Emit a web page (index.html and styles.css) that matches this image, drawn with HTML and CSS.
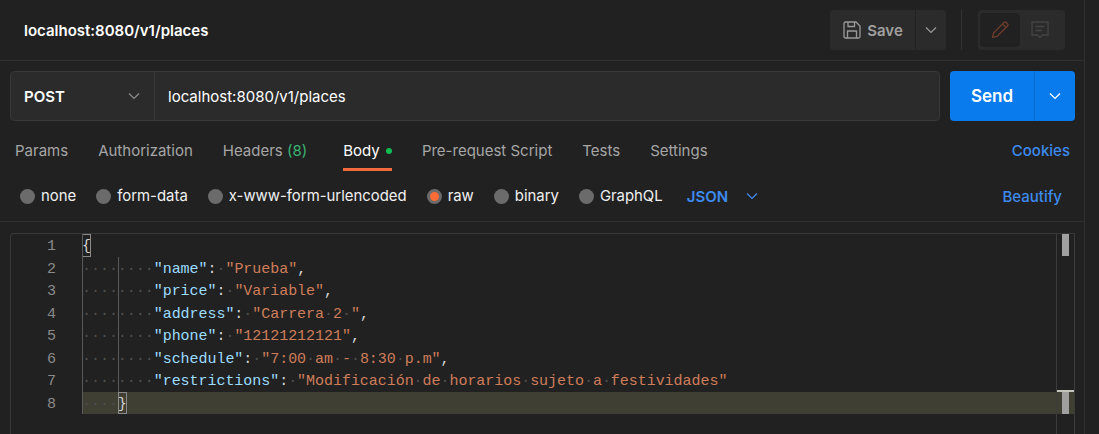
FILE: index.html
```html
<!DOCTYPE html>
<html lang="en">
<head>
    <meta charset="UTF-8">
    <title>localhost:8080/v1/places</title>
    <link rel="stylesheet" href="styles.css">
</head>
<body>
    <div class="app">
        <div class="main">
            <div class="header">
                <div class="request-name">localhost:8080/v1/places</div>
                <div class="header-actions">
                    <div class="save-group">
                        <button class="save-button">
                            <svg width="20" height="20" viewBox="0 0 20 20" fill="none" stroke="#9a9a9a" stroke-width="1.3">
                                <path d="M2 3.5C2 2.7 2.7 2 3.5 2H14L18 6V16.5C18 17.3 17.3 18 16.5 18H3.5C2.7 18 2 17.3 2 16.5Z"/>
                                <path d="M6 2V6.5H12.5V2"/>
                                <path d="M5.5 18V11H14.5V18"/>
                            </svg>
                            Save
                        </button>
                        <button class="save-arrow">
                            <svg class="chevron" width="12" height="8" viewBox="0 0 12 8" fill="none" stroke="#9a9a9a" stroke-width="1.2"><path d="M1 1.5L6 6.5L11 1.5"/></svg>
                        </button>
                    </div>
                    <div class="header-divider"></div>
                    <div class="mode-group">
                        <div class="mode-tile active">
                            <svg width="20" height="20" viewBox="0 0 20 20" fill="none" stroke="#6e3d2b" stroke-width="1.3">
                                <path d="M2.5 17.5L3.5 13L14 2.5C14.7 1.8 15.6 1.8 16.3 2.5L17.5 3.7C18.2 4.4 18.2 5.3 17.5 6L7 16.5Z"/>
                                <path d="M12.5 4L16 7.5"/>
                            </svg>
                        </div>
                        <div class="mode-tile">
                            <svg width="20" height="20" viewBox="0 0 20 20" fill="none" stroke="#444" stroke-width="1.3">
                                <path d="M2 2H18V15H12.5L10 17.5L7.5 15H2Z"/>
                                <path d="M5.5 6.5H14.5M5.5 10.5H12"/>
                            </svg>
                        </div>
                    </div>
                </div>
            </div>

            <div class="url-row">
                <div class="url-box">
                    <div class="method">
                        POST
                        <svg class="chevron" width="12" height="8" viewBox="0 0 12 8" fill="none" stroke="#8c8c8c" stroke-width="1.2"><path d="M1 1.5L6 6.5L11 1.5"/></svg>
                    </div>
                    <div class="url-text">localhost:8080/v1/places</div>
                </div>
                <div class="send-group">
                    <button class="send-button">Send</button>
                    <button class="send-arrow">
                        <svg class="chevron" width="12" height="8" viewBox="0 0 12 8" fill="none" stroke="#fff" stroke-width="1.2"><path d="M1 1.5L6 6.5L11 1.5"/></svg>
                    </button>
                </div>
            </div>

            <div class="tabs">
                <div class="tab">Params</div>
                <div class="tab">Authorization</div>
                <div class="tab">Headers <span class="count">(8)</span></div>
                <div class="tab selected">Body <span class="dot"></span></div>
                <div class="tab">Pre-request Script</div>
                <div class="tab">Tests</div>
                <div class="tab">Settings</div>
                <div class="cookies">Cookies</div>
            </div>

            <div class="body-options">
                <div class="radio"><span class="circle"></span>none</div>
                <div class="radio"><span class="circle"></span>form-data</div>
                <div class="radio"><span class="circle"></span>x-www-form-urlencoded</div>
                <div class="radio"><span class="circle checked"></span>raw</div>
                <div class="radio"><span class="circle"></span>binary</div>
                <div class="radio"><span class="circle"></span>GraphQL</div>
                <div class="json-select">
                    JSON
                    <svg width="12" height="8" viewBox="0 0 12 8" fill="none" stroke="#3d8bf0" stroke-width="1.2"><path d="M1 1.5L6 6.5L11 1.5"/></svg>
                </div>
                <div class="beautify">Beautify</div>
            </div>

            <div class="editor">
                <div class="gutter">
                    <div>1</div><div>2</div><div>3</div><div>4</div>
                    <div>5</div><div>6</div><div>7</div><div>8</div>
                </div>
                <div class="code">
                    <div class="guide guide-outer"></div>
                    <div class="guide guide-inner"></div>
                    <div class="line"><span class="bracket">{</span></div>
                    <div class="line"><span class="ws">········</span><span class="key">"name"</span>:<span class="ws">·</span><span class="str">"Prueba"</span>,</div>
                    <div class="line"><span class="ws">········</span><span class="key">"price"</span>:<span class="ws">·</span><span class="str">"Variable"</span>,</div>
                    <div class="line"><span class="ws">········</span><span class="key">"address"</span>:<span class="ws">·</span><span class="str">"Carrera<span class="ws">·</span>2<span class="ws">·</span>"</span>,</div>
                    <div class="line"><span class="ws">········</span><span class="key">"phone"</span>:<span class="ws">·</span><span class="str">"12121212121"</span>,</div>
                    <div class="line"><span class="ws">········</span><span class="key">"schedule"</span>:<span class="ws">·</span><span class="str">"7:00<span class="ws">·</span>am<span class="ws">·</span>-<span class="ws">·</span>8:30<span class="ws">·</span>p.m"</span>,</div>
                    <div class="line"><span class="ws">········</span><span class="key">"restrictions"</span>:<span class="ws">·</span><span class="str">"Modificación<span class="ws">·</span>de<span class="ws">·</span>horarios<span class="ws">·</span>sujeto<span class="ws">·</span>a<span class="ws">·</span>festividades"</span></div>
                    <div class="line current"><span class="ws">····</span><span class="bracket">}</span></div>
                </div>
                <div class="ruler">
                    <div class="ruler-thumb top"></div>
                    <div class="ruler-mark"></div>
                    <div class="ruler-thumb bottom"></div>
                </div>
            </div>
        </div>
        <div class="side"></div>
    </div>
</body>
</html>
```

FILE: styles.css
```css
html, body {
    margin: 0;
    height: 100%;
    overflow: hidden;
}

body {
    background-color: #212121;
    color: #fff;
    font-family: Inter, "Noto Sans", sans-serif;
    font-size: 15px;
}

button {
    border: none;
    padding: 0;
    font-family: inherit;
    cursor: pointer;
}

.app {
    display: flex;
    height: 434px;
}

.main {
    width: 1084px;
    flex: none;
    border-right: 1px solid #303030;
}

.side {
    flex: 1;
}

/* top bar */
.header {
    height: 60px;
    display: flex;
    align-items: center;
    justify-content: space-between;
    border-bottom: 1px solid #303030;
    padding: 0 19px 0 24px;
}

.request-name {
    font-weight: 600;
}

.header-actions {
    display: flex;
    align-items: center;
}

.save-group {
    display: flex;
    height: 40px;
}

.save-button {
    width: 85px;
    display: flex;
    align-items: center;
    justify-content: center;
    gap: 5px;
    background-color: #2b2b2b;
    color: #a0a0a0;
    font-size: 15px;
    font-weight: 600;
    border-radius: 4px 0 0 4px;
}

.save-arrow {
    width: 30px;
    margin-left: 1px;
    display: flex;
    align-items: center;
    justify-content: center;
    background-color: #2b2b2b;
    border-radius: 0 4px 4px 0;
}

.header-divider {
    width: 1px;
    height: 40px;
    background-color: #333;
    margin: 0 16px 0 15px;
}

.mode-group {
    width: 87px;
    height: 40px;
    box-sizing: border-box;
    padding: 3px 2px;
    display: flex;
    background-color: #2b2b2b;
    border-radius: 4px;
}

.mode-tile {
    width: 40px;
    display: flex;
    align-items: center;
    justify-content: center;
    border-radius: 4px;
}

.mode-tile.active {
    background-color: #212121;
}

/* url row */
.url-row {
    display: flex;
    gap: 10px;
    padding: 10px 9px 0 10px;
}

.url-box {
    flex: 1;
    height: 50px;
    box-sizing: border-box;
    display: flex;
    align-items: center;
    background-color: #2b2b2b;
    border: 1px solid #383838;
    border-radius: 4px;
}

.method {
    width: 144px;
    height: 100%;
    box-sizing: border-box;
    padding: 0 14px 0 13px;
    display: flex;
    align-items: center;
    justify-content: space-between;
    font-weight: 600;
    border-right: 1px solid #383838;
}

.url-text {
    padding-left: 13px;
}

.send-group {
    width: 125px;
    display: flex;
    height: 50px;
}

.send-button {
    width: 84px;
    background-color: #097bed;
    color: #fff;
    font-size: 17px;
    font-weight: 600;
    border-radius: 4px 0 0 4px;
}

.send-arrow {
    flex: 1;
    display: flex;
    align-items: center;
    justify-content: center;
    background-color: #097bed;
    border-left: 1px solid #0a6bcc;
    border-radius: 0 4px 4px 0;
}

/* tabs */
.tabs {
    height: 50px;
    display: flex;
    gap: 30px;
    padding: 0 14px 0 15px;
}

.tab {
    height: 50px;
    box-sizing: border-box;
    padding-top: 20px;
    line-height: 20px;
    color: #a6a6a6;
    white-space: nowrap;
}

.tab.selected {
    margin-left: 6px;
    color: #fff;
    border-bottom: 3px solid #f26b3a;
}

.count {
    color: #3bb273;
}

.dot {
    display: inline-block;
    width: 6px;
    height: 6px;
    margin-left: 2px;
    vertical-align: 2px;
    border-radius: 50%;
    background-color: #0cbb52;
}

.cookies {
    margin-left: auto;
    padding-top: 20px;
    line-height: 20px;
    color: #3d8bf0;
    font-weight: 500;
}

/* body type options */
.body-options {
    height: 51px;
    box-sizing: border-box;
    display: flex;
    align-items: center;
    gap: 20px;
    padding: 0 22px 0 20px;
    border-bottom: 1px solid #303030;
}

.radio {
    display: flex;
    align-items: center;
    gap: 6px;
    font-size: 14.9px;
    color: #f0f0f0;
}

.circle {
    width: 15px;
    height: 15px;
    border-radius: 50%;
    background-color: #6b6b6b;
}

.circle.checked {
    box-sizing: border-box;
    border: 3px solid #6b6b6b;
    background-color: #ff6c37;
}

.json-select {
    display: flex;
    align-items: center;
    gap: 18px;
    margin-left: 4px;
    color: #3d8bf0;
    font-weight: 600;
}

.beautify {
    margin-left: auto;
    color: #3d8bf0;
    font-weight: 500;
}

/* editor */
.editor {
    position: relative;
    display: flex;
    margin: 11px 9px 0 10px;
    border-top: 1px solid #383838;
    border-left: 1px solid #383838;
    border-top-left-radius: 4px;
    height: 200px;
    font-family: "Liberation Mono", monospace;
    font-size: 15px;
    line-height: 22.5px;
}

.gutter {
    width: 45px;
    flex: none;
    box-sizing: border-box;
    padding-top: 2px;
    text-align: right;
    color: #8a8a8a;
}

.code {
    position: relative;
    flex: 1;
    margin-left: 26px;
    color: #d4d4d4;
    letter-spacing: -0.04px;
}

.line {
    height: 22.5px;
    box-sizing: border-box;
    padding-top: 2px;
    white-space: pre;
}

.line.current {
    background-color: #3f3f33;
}

.key {
    color: #9cdcfe;
}

.str {
    color: #ce7d5a;
}

.ws {
    color: #4f4f4f;
}

.bracket {
    display: inline-block;
    vertical-align: top;
    height: 22.5px;
    margin-top: -2px;
    padding-top: 2px;
    box-sizing: border-box;
    outline: 1px solid #8a8a8a;
    outline-offset: -1px;
    color: #d4d4d4;
}

.guide {
    position: absolute;
    width: 1px;
    background-color: #5a5a5a;
}

.guide-outer {
    left: 0;
    top: 0;
    height: 180px;
}

.guide-inner {
    left: 36px;
    top: 23px;
    height: 135px;
}

.ruler {
    position: absolute;
    right: 0;
    top: 0;
    width: 19px;
    height: 200px;
    box-sizing: border-box;
    border-left: 1px solid #3c3c3c;
    border-right: 1px solid #3c3c3c;
}

.ruler-thumb {
    position: absolute;
    left: 5px;
    width: 7px;
    background-color: #a0a0a0;
}

.ruler-thumb.top {
    top: 0;
    height: 22px;
}

.ruler-thumb.bottom {
    top: 158px;
    height: 22px;
}

.ruler-mark {
    position: absolute;
    left: 0;
    top: 156px;
    width: 17px;
    height: 2px;
    background-color: #c4c4bc;
}
```
